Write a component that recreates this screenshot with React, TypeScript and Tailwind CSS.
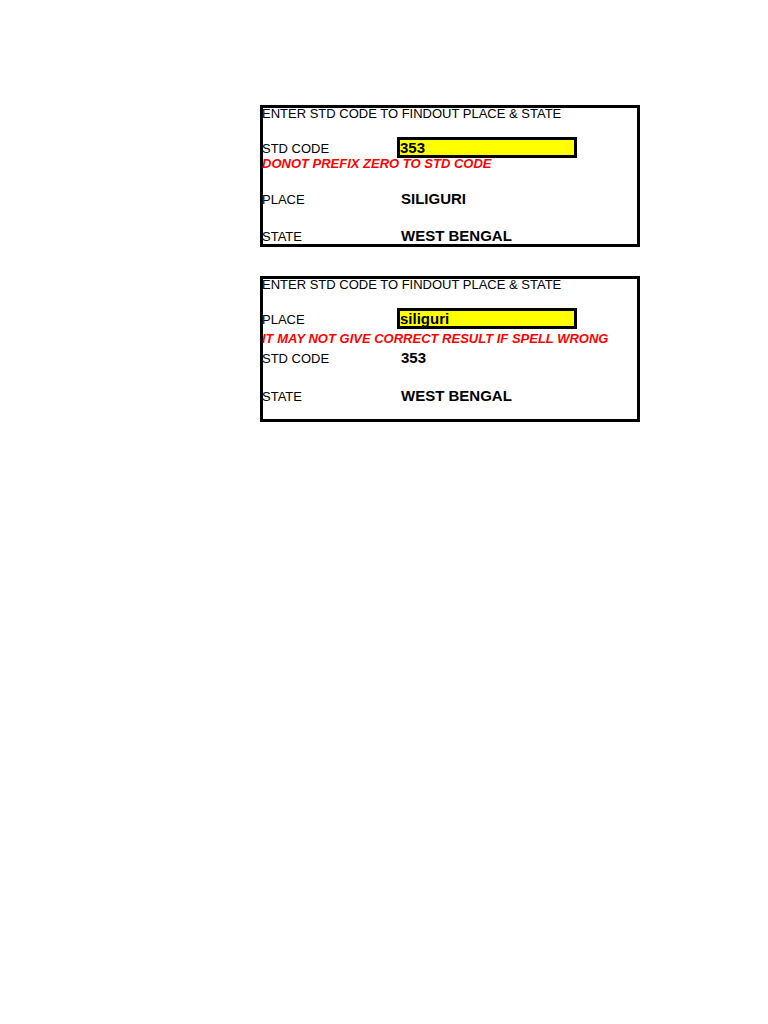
import React from "react";

const font = { fontFamily: '"Liberation Sans", Arial, sans-serif' };

function Title() {
  return (
    <div className="-ml-px h-[11px] text-[13px] leading-[11px] text-black whitespace-nowrap">
      ENTER STD CODE TO FINDOUT PLACE &amp; STATE
    </div>
  );
}

function Row({
  label,
  children,
  className,
}: {
  label: string;
  children: React.ReactNode;
  className: string;
}) {
  return (
    <div className={`flex items-center ${className}`}>
      <div className="-ml-px w-[135px] shrink-0 pt-[2px] text-[13px] leading-none text-black">
        {label}
      </div>
      {children}
    </div>
  );
}

function Value({ text }: { text: string }) {
  return (
    <div className="pl-[4px] text-[15px] font-bold leading-none text-black">
      {text}
    </div>
  );
}

function InputField({ value }: { value: string }) {
  return (
    <div className="flex h-[21px] w-[180px] items-center border-[3px] border-black bg-[#ffff00] text-[15px] font-bold leading-none text-black">
      {value}
    </div>
  );
}

function Warning({ text, className }: { text: string; className: string }) {
  return (
    <div
      className={`-ml-px h-[11px] text-[13px] font-bold italic leading-[11px] text-[#ff0000] whitespace-nowrap ${className}`}
    >
      {text}
    </div>
  );
}

export default function App() {
  return (
    <div className="min-h-screen bg-white pl-[260px] pt-[105px]" style={font}>
      {/* lookup by STD code */}
      <div className="flex h-[142px] w-[380px] flex-col border-[3px] border-black">
        <Title />
        <Row label="STD CODE" className="mt-[18px] h-[21px]">
          <InputField value="353" />
        </Row>
        <Warning text="DONOT PREFIX ZERO TO STD CODE" className="" />
        <Row label="PLACE" className="mt-[19px] h-[20px]">
          <Value text="SILIGURI" />
        </Row>
        <Row label="STATE" className="mt-[18px] h-[18px]">
          <Value text="WEST BENGAL" />
        </Row>
      </div>

      {/* lookup by place name */}
      <div className="mt-[29px] flex h-[146px] w-[380px] flex-col border-[3px] border-black">
        <Title />
        <Row label="PLACE" className="mt-[18px] h-[21px]">
          <InputField value="siliguri" />
        </Row>
        <Warning
          text="IT MAY NOT GIVE CORRECT RESULT IF SPELL WRONG"
          className="mt-[4px]"
        />
        <Row label="STD CODE" className="mt-[4px] h-[18px]">
          <Value text="353" />
        </Row>
        <Row label="STATE" className="mt-[20px] h-[18px]">
          <Value text="WEST BENGAL" />
        </Row>
      </div>
    </div>
  );
}
